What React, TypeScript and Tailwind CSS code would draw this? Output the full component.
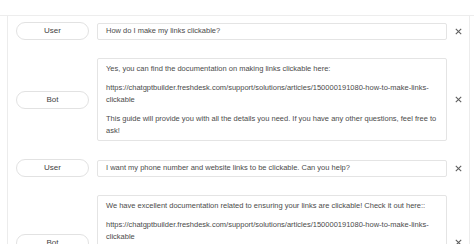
const rows: { role: string; lines: string[] }[] = [
  { role: "User", lines: ["How do I make my links clickable?"] },
  {
    role: "Bot",
    lines: [
      "Yes, you can find the documentation on making links clickable here:",
      "",
      "https://chatgptbuilder.freshdesk.com/support/solutions/articles/150000191080-how-to-make-links-",
      "clickable",
      "",
      "This guide will provide you with all the details you need. If you have any other questions, feel free to",
      "ask!",
    ],
  },
  { role: "User", lines: ["I want my phone number and website links to be clickable. Can you help?"] },
  {
    role: "Bot",
    lines: [
      "We have excellent documentation related to ensuring your links are clickable! Check it out here::",
      "",
      "https://chatgptbuilder.freshdesk.com/support/solutions/articles/150000191080-how-to-make-links-",
      "clickable",
      "",
      "This guide walks you through every step needed to make your phone number and website links",
      "clickable for your users. If anything is unclear or you get stuck along the way, just let me know",
      "and I'll be happy to help!",
    ],
  },
];

function CloseIcon() {
  return (
    <svg width="7" height="7" viewBox="0 0 7 7" className="text-[#5f5f5f]">
      <path d="M0.8 0.8 L6.2 6.2 M6.2 0.8 L0.8 6.2" stroke="currentColor" strokeWidth="1.1" />
    </svg>
  );
}

export default function App() {
  return (
    <div className="w-[474px] h-[244px] overflow-hidden bg-white font-['Liberation_Sans',Arial,sans-serif] text-[#4b4b4b]">
      <div className="h-[15px]" />
      <div className="border-t border-[#ededed]">
        <div className="ml-[7px] mr-[4px] border-x border-[#ececec] pl-[8px] pt-[6px] flex flex-col gap-[18px] h-[320px]">
          {rows.map((r, i) => (
            <div key={i} className="flex items-center">
              <div className="w-[73px] h-[18px] shrink-0 rounded-full border border-[#e2e2e2] flex items-center justify-center text-[8px] text-[#3f3f3f]">
                {r.role}
              </div>
              <div
                className={
                  "ml-[8px] flex-1 border border-[#e4e4e4] rounded-[2px] pl-[8px] text-[7.5px] leading-[12px] " +
                  (r.lines.length > 1 ? "py-[3.5px]" : "h-[17px] flex items-center")
                }
              >
                <div>
                  {r.lines.map((l, j) => (
                    <div key={j} className={l ? "whitespace-nowrap h-[12px]" : "h-[7px]"}>
                      {l}
                    </div>
                  ))}
                </div>
              </div>
              <div className="w-[22px] shrink-0 flex justify-center">
                <CloseIcon />
              </div>
            </div>
          ))}
        </div>
      </div>
    </div>
  );
}
